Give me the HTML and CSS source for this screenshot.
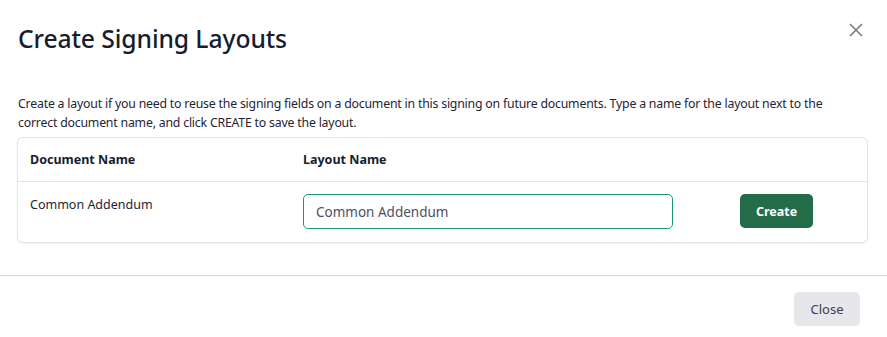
FILE: index.html
```html
<!DOCTYPE html>
<html>
<head>
<meta charset="utf-8">
<link rel="stylesheet" href="styles.css">
</head>
<body>
<div class="modal">
  <div class="modal-header">
    <h2 class="title">Create Signing Layouts</h2>
    <button class="close-x" aria-label="Close">
      <svg width="14" height="14" viewBox="0 0 14 14"><path d="M1 1L13 13M13 1L1 13" stroke="#7b7b7b" stroke-width="1.6" fill="none"/></svg>
    </button>
  </div>
  <div class="modal-body">
    <p class="desc">Create a layout if you need to reuse the signing fields on a document in this signing on future documents. Type a name for the layout next to the correct document name, and click CREATE to save the layout.</p>
    <div class="card">
      <div class="row head">
        <div class="cell">Document Name</div>
        <div class="cell">Layout Name</div>
        <div class="cell"></div>
      </div>
      <div class="row item">
        <div class="cell name">Common Addendum</div>
        <div class="cell"><input class="input" type="text" value="Common Addendum"></div>
        <div class="cell"><button class="btn-create">Create</button></div>
      </div>
    </div>
  </div>
  <div class="modal-footer">
    <button class="btn-close">Close</button>
  </div>
</div>
</body>
</html>
```

FILE: styles.css
```css
* { box-sizing: border-box; }
html, body { margin: 0; padding: 0; background: #fff; }
body {
  font-family: "Noto Sans", "Open Sans", "Liberation Sans", sans-serif;
  color: #1f2433;
  width: 887px;
  height: 337px;
  overflow: hidden;
}
.modal { display: flex; flex-direction: column; }
.modal-header {
  display: flex;
  justify-content: space-between;
  align-items: flex-start;
  padding: 22px 24px 0 18px;
  height: 94px;
}
.title {
  margin: 0;
  font-size: 24.7px;
  font-weight: 500;
  line-height: 34px;
  color: #161d2f;
  letter-spacing: -0.1px;
}
.close-x {
  border: 0;
  background: none;
  padding: 0;
  margin-top: 1px;
  width: 14px;
  height: 14px;
  display: flex;
}
.modal-body { padding: 0 19px 0 17px; }
.desc {
  margin: 0 0 0 1px;
  max-width: 812px;
  font-size: 12.3px;
  letter-spacing: -0.2px;
  line-height: 19px;
  color: #1f2433;
  height: 43px;
}
.card {
  border: 1px solid #e3e4e8;
  border-radius: 6px;
  box-shadow: 0 1px 2px rgba(0,0,0,0.05);
  background: #fff;
}
.row {
  display: grid;
  grid-template-columns: 273px 437px 1fr;
}
.head {
  height: 44px;
  align-items: center;
  border-bottom: 1px solid #e3e4e8;
  font-weight: 700;
  font-size: 12.5px;
  color: #161d2f;
}
.cell { padding-left: 12px; }
.item { height: 60px; align-items: start; font-size: 12.5px; }
.item .name { padding-top: 14px; color: #1f2433; }
.item .cell:nth-child(2), .item .cell:nth-child(3) { padding-top: 12px; }
.input {
  width: 370px;
  height: 35px;
  border: 1px solid #1d9a6c;
  border-radius: 5px;
  padding: 0 12px;
  font-family: inherit;
  font-size: 13.5px;
  color: #4b5060;
  outline: none;
}
.btn-create {
  margin-left: 0;
  width: 73px;
  height: 34px;
  border: 0;
  border-radius: 5px;
  background: #246b4a;
  color: #fff;
  font-family: inherit;
  font-weight: 700;
  font-size: 12.5px;
}
.modal-footer {
  margin-top: 32px;
  border-top: 1px solid #d6d6dc;
  display: flex;
  justify-content: flex-end;
  padding: 16px 27px 0 0;
}
.btn-close {
  width: 66px;
  height: 34px;
  border: 0;
  border-radius: 5px;
  background: #e6e7eb;
  color: #3a4150;
  font-family: inherit;
  font-size: 13px;
}
```
